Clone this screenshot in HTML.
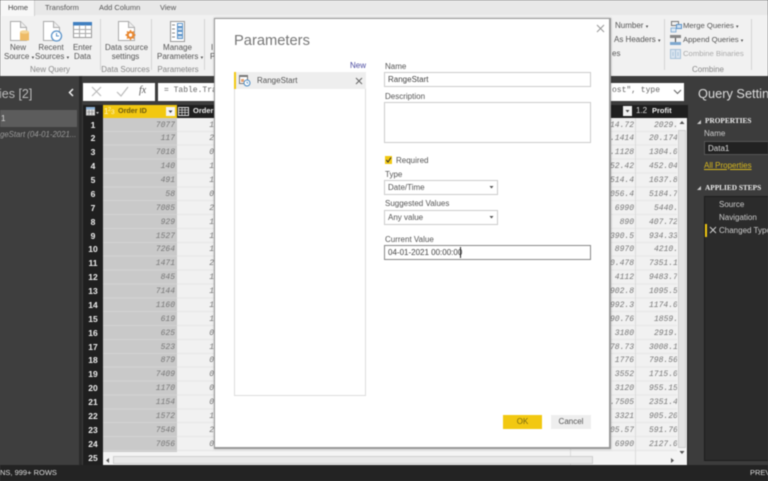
<!DOCTYPE html>
<html><head><meta charset="utf-8"><title>Parameters</title>
<style>
html,body{margin:0;padding:0;width:768px;height:481px;overflow:hidden;background:#3c3c3c}
#w{position:relative;width:768px;height:481px;overflow:hidden;font-family:"Liberation Sans",sans-serif;filter:blur(.5px)}
#w div{position:absolute}
.t{position:absolute;white-space:nowrap;line-height:10px;font-size:8px;color:#555}
.c{text-align:center}
.g{color:#777}
.sep{width:1px;background:#d4d4d4;top:19px;height:51px}
.num{font:italic 8px/13.87px "Liberation Mono",monospace;text-align:right;color:#777;top:118.5px;white-space:nowrap;overflow:hidden}
.in{background:#fff;border:1px solid #ccc;box-sizing:border-box}
svg{position:absolute;overflow:visible}
</style></head><body><div id="w">

<!-- ribbon -->
<div style="left:0;top:0;width:768px;height:15px;background:#e8e8e8"></div>
<div style="left:0;top:15px;width:768px;height:61px;background:#f1f1f1"></div>
<div style="left:1px;top:0;width:33px;height:16px;background:#f7f7f7;border-right:1px solid #d0d0d0"></div>
<span class="t" style="left:8px;top:3px;font-size:7.5px;color:#444">Home</span>
<span class="t" style="left:45px;top:3px;font-size:7.5px">Transform</span>
<span class="t" style="left:99px;top:3px;font-size:7.5px">Add Column</span>
<span class="t" style="left:160px;top:3px;font-size:7.5px">View</span>

<svg style="left:0;top:0" width="768" height="76">
 <!-- new source -->
 <path d="M10.500 21.500h10l6 6v13h-16z" fill="#fff" stroke="#aaa"/><path d="M20.500 21.500v6h6" fill="#eee" stroke="#aaa"/>
 <path d="M20 32h9v8.500h-9z" fill="#eebb66"/><ellipse cx="24.500" cy="32" rx="4.500" ry="1.700" fill="#f4d596"/>
 <!-- recent sources -->
 <path d="M43.500 21.500h10l6 6v13h-16z" fill="#fff" stroke="#aaa"/><path d="M53.500 21.500v6h6" fill="#eee" stroke="#aaa"/>
 <circle cx="56.500" cy="36" r="5" fill="#fff" stroke="#5b93c9" stroke-width="1.300"/><path d="M56.500 33v3h2.500" fill="none" stroke="#5b93c9"/>
 <!-- enter data -->
 <rect x="73.500" y="22.500" width="18" height="15" fill="#fff" stroke="#999"/><rect x="73" y="22" width="19" height="3.500" fill="#3f7fc0"/>
 <path d="M73.500 29.500h18M73.500 33.500h18M79.500 25v12M85.500 25v12" stroke="#aaa" fill="none"/>
 <!-- data source settings -->
 <path d="M118.500 21.500h10l6 6v13h-16z" fill="#fff" stroke="#aaa"/><path d="M128.500 21.500v6h6" fill="#eee" stroke="#aaa"/>
 <circle cx="130.500" cy="35" r="2.800" fill="none" stroke="#e8862e" stroke-width="2.200"/>
 <path d="M130.500 30v2M130.500 38v2M125.500 35h2M133.500 35h2M127 31.500l1.400 1.400M132.600 37.100l1.400 1.400M127 38.500l1.400-1.400M132.600 32.900l1.400-1.400" stroke="#e8862e" stroke-width="1.400"/>
 <!-- manage parameters -->
 <rect x="170.500" y="21.500" width="14" height="20" fill="#fff" stroke="#999"/>
 <path d="M172 25h3M172 29h3M172 33h3M172 37h3" stroke="#888"/>
 <rect x="177.500" y="23.500" width="5" height="3" fill="#fff" stroke="#5b93c9"/><rect x="177.500" y="27.500" width="5" height="3" fill="#cfe0f0" stroke="#5b93c9"/>
 <rect x="177.500" y="31.500" width="5" height="3" fill="#fff" stroke="#5b93c9"/><rect x="177.500" y="35.500" width="5" height="3" fill="#cfe0f0" stroke="#5b93c9"/>
 <!-- merge -->
 <path d="M671.500 21.500h7v4h-7z" fill="none" stroke="#777"/>
 <rect x="676.500" y="24.500" width="5" height="4" fill="#cfe0f0" stroke="#5b93c9"/>
 <rect x="671" y="28" width="5" height="4" fill="#dce8f3" stroke="#5b93c9" stroke-width=".6"/>
 <!-- append -->
 <rect x="670" y="35" width="11" height="3" fill="#888"/><rect x="670" y="42" width="11" height="3" fill="#7ea8cf"/>
 <path d="M675.500 38v4" stroke="#444" fill="none"/>
 <!-- combine -->
 <rect x="670.500" y="49.500" width="10" height="9" fill="#dbe6f0" stroke="#a9c2da"/>
 <path d="M673 52v4M678 52v4M675.500 50v8" stroke="#a9c2da"/>
</svg>

<span class="t c" style="left:8px;width:20px;top:43px">New</span>
<span class="t" style="left:4px;top:52px">Source <span style="font-size:5px">▾</span></span>
<span class="t c" style="left:36px;width:30px;top:43px">Recent</span>
<span class="t" style="left:35px;top:52px">Sources <span style="font-size:5px">▾</span></span>
<span class="t c" style="left:70px;width:25px;top:43px">Enter</span>
<span class="t c" style="left:70px;width:25px;top:52px">Data</span>
<span class="t c g" style="left:25px;width:50px;top:65px;color:#888">New Query</span>
<div class="sep" style="left:100px"></div>
<span class="t" style="left:105px;top:43px">Data source</span>
<span class="t c" style="left:105px;width:41px;top:52px">settings</span>
<span class="t c" style="left:100px;width:51px;top:65px;color:#888">Data Sources</span>
<div class="sep" style="left:151px"></div>
<span class="t c" style="left:155px;width:45px;top:43px">Manage</span>
<span class="t" style="left:157px;top:52px">Parameters <span style="font-size:5px">▾</span></span>
<span class="t c" style="left:152px;width:52px;top:65px;color:#888">Parameters</span>
<div class="sep" style="left:204px"></div>
<span class="t" style="left:211px;top:43px">I</span>
<span class="t" style="left:210px;top:52px">P</span>

<span class="t" style="left:615px;top:21px">Number <span style="font-size:5px">▾</span></span>
<span class="t" style="left:614px;top:35px">As Headers <span style="font-size:5px">▾</span></span>
<span class="t" style="left:612px;top:49px">es</span>
<div class="sep" style="left:664px"></div>
<span class="t" style="left:683px;top:21px;font-size:7.700px">Merge Queries <span style="font-size:5px">▾</span></span>
<span class="t" style="left:683px;top:35px;font-size:7.700px">Append Queries <span style="font-size:5px">▾</span></span>
<span class="t" style="left:683px;top:49px;color:#aaa;font-size:7.700px">Combine Binaries</span>
<span class="t c" style="left:665px;width:86px;top:65px;color:#888">Combine</span>
<div class="sep" style="left:751px"></div>

<!-- left panel -->
<div style="left:0;top:76px;width:80px;height:389px;background:#3e3e3e"></div>
<div style="left:79px;top:76px;width:3px;height:389px;background:#2a2a2a"></div>
<span class="t" style="left:-1px;top:87px;font-size:12.500px;line-height:14px;color:#bbb">ies [2]</span>
<svg style="left:68px;top:88px" width="7" height="9"><path d="M5 1L1.500 4.500 5 8" fill="none" stroke="#eee" stroke-width="1.500"/></svg>
<div style="left:0;top:110px;width:77px;height:17px;background:#5c5c5c"></div>
<span class="t" style="left:1px;top:114px;color:#ddd">1</span>
<span class="t" style="left:0;top:130px;font-style:italic;color:#999;font-size:7.800px">geStart (04-01-2021...</span>

<!-- formula bar -->
<div style="left:83px;top:83px;width:72px;height:18px;background:#fff"></div>
<div style="left:158px;top:83px;width:526px;height:18px;background:#fff"></div>
<svg style="left:83px;top:83px" width="72" height="18">
 <path d="M9 4l9 9M18 4l-9 9" stroke="#bbb" stroke-width="1.200" fill="none"/>
 <path d="M34 9l4 4 7-9" stroke="#bbb" stroke-width="1.200" fill="none"/>
</svg>
<span class="t" style="left:139px;top:86px;font:italic 10px/10px 'Liberation Serif',serif;color:#555">fx</span>
<span class="t" style="left:164px;top:86px;font:8px/10px 'Liberation Mono',monospace;color:#666">= Table.TransformColumnTypes</span>
<span class="t" style="left:611px;top:86px;font:8px/10px 'Liberation Mono',monospace;color:#666;background:#fff;padding-left:1px">ost", type</span>
<svg style="left:673px;top:89px" width="9" height="6"><path d="M1 1l3.500 3.500L8 1" fill="none" stroke="#666" stroke-width="1.100"/></svg>

<!-- grid -->
<div style="left:83px;top:105px;width:605px;height:360px;background:#1f1f1f"></div>
<div style="left:103px;top:118px;width:574px;height:334px;background:repeating-linear-gradient(to bottom,#f1f1f1 0,#f1f1f1 12.870px,#e6e6e6 12.870px,#e6e6e6 13.870px)"></div>
<div style="left:103px;top:118px;width:74px;height:334px;background:repeating-linear-gradient(to bottom,#c9c9c9 0,#c9c9c9 12.870px,#d3d3d3 12.870px,#d3d3d3 13.870px)"></div>
<div style="left:103px;top:452px;width:584px;height:13px;background:#f4f4f4"></div>
<div style="left:103px;top:105px;width:74px;height:13px;background:#f2c811"></div>
<span class="t" style="left:104px;top:107px;font-size:8px;color:#fff6c8">1</span>
<span class="t" style="left:108px;top:105px;font-size:5.500px;color:#fff6c8">2</span>
<span class="t" style="left:111px;top:108px;font-size:6.500px;color:#fff6c8">3</span>
<span class="t" style="left:118px;top:106px;font-weight:bold;font-size:7.200px;color:#6b5a10">Order ID</span>
<div style="left:166px;top:107px;width:9px;height:9px;background:#f4f4f4"></div>
<svg style="left:166px;top:107px" width="9" height="9"><path d="M2.500 3.500h4L4.500 6z" fill="#444"/></svg>
<svg style="left:86px;top:107px" width="14" height="9"><rect x=".5" y=".5" width="8" height="7.500" fill="#ddd" stroke="#ccc"/><rect x="0" y="0" width="9" height="2.500" fill="#8fb4d8"/><path d="M3 3v5M6 3v5M1 5h7" stroke="#777" stroke-width=".6"/><path d="M10 5h3l-1.500 2z" fill="#ccc"/></svg>
<svg style="left:178px;top:107px" width="11" height="9"><rect x=".5" y=".5" width="10" height="8" fill="#222" stroke="#ddd"/><path d="M1 3h9M1 5.500h9M4 1v7M7 1v7" stroke="#ddd" stroke-width=".7"/></svg>
<span class="t" style="left:193px;top:106px;font-weight:bold;font-size:7.500px;color:#eee">Order</span>
<div style="left:623px;top:106px;width:9px;height:10px;background:#f2f2f2"></div>
<svg style="left:623px;top:106px" width="9" height="10"><path d="M2.500 4h4L4.500 6.500z" fill="#444"/></svg>
<span class="t" style="left:636px;top:106px;font-size:8px;color:#ddd">1.2</span>
<span class="t" style="left:652px;top:106px;font-size:7.500px;font-weight:bold;color:#eee">Profit</span>

<div style="left:83px;top:118.500px;width:20px;color:#eee;font:bold 8.500px/13.870px 'Liberation Sans',sans-serif;text-align:center">1<br>2<br>3<br>4<br>5<br>6<br>7<br>8<br>9<br>10<br>11<br>12<br>13<br>14<br>15<br>16<br>17<br>18<br>19<br>20<br>21<br>22<br>23<br>24<br>25</div>
<div class="num" style="left:103px;width:72px;height:334px">7077<br>117<br>7018<br>140<br>491<br>58<br>7085<br>929<br>1527<br>7264<br>1471<br>845<br>7144<br>1160<br>619<br>625<br>523<br>879<br>7409<br>1170<br>1154<br>1572<br>7548<br>7056</div>
<div class="num" style="left:177px;width:37px;height:334px">1<br>2<br>0<br>1<br>1<br>0<br>2<br>1<br>1<br>1<br>2<br>1<br>1<br>1<br>1<br>0<br>1<br>0<br>0<br>0<br>0<br>1<br>2<br>0</div>
<div class="num" style="left:600px;width:34px;height:334px">14.72<br>.1414<br>.1128<br>52.42<br>514.4<br>056.4<br>6990<br>890<br>390.5<br>8970<br>0.478<br>4112<br>902.8<br>992.3<br>90.76<br>3180<br>78.73<br>1776<br>3552<br>3120<br>.7505<br>3321<br>05.57<br>6990</div>
<div style="left:635px;top:118px;width:1px;height:347px;background:#dcdcdc"></div>
<div style="left:570px;top:449px;width:1px;height:16px;background:#dcdcdc"></div>
<div class="num" style="left:638px;width:39px;height:334px;text-align:left;padding-left:0"><span style="margin-left:16px">2029.</span><br><span style="margin-left:11px">20.174</span><br><span style="margin-left:11px">1304.0</span><br><span style="margin-left:11px">452.04</span><br><span style="margin-left:11px">1637.8</span><br><span style="margin-left:11px">5184.7</span><br><span style="margin-left:16px">5440.</span><br><span style="margin-left:11px">407.72</span><br><span style="margin-left:11px">934.33</span><br><span style="margin-left:16px">4210.</span><br><span style="margin-left:11px">7351.1</span><br><span style="margin-left:11px">9483.7</span><br><span style="margin-left:11px">1095.5</span><br><span style="margin-left:11px">1174.0</span><br><span style="margin-left:16px">1859.</span><br><span style="margin-left:16px">2919.</span><br><span style="margin-left:11px">3008.1</span><br><span style="margin-left:11px">798.56</span><br><span style="margin-left:11px">1715.0</span><br><span style="margin-left:11px">955.15</span><br><span style="margin-left:11px">2351.4</span><br><span style="margin-left:11px">905.20</span><br><span style="margin-left:11px">591.76</span><br><span style="margin-left:11px">2127.0</span></div>

<!-- scrollbars -->
<div style="left:677px;top:118px;width:10px;height:347px;background:#f4f4f4"></div>
<div style="left:678px;top:130px;width:8px;height:318px;background:#e4e4e4;border:1px solid #cfcfcf;box-sizing:border-box"></div>
<svg style="left:678px;top:120px" width="8" height="6"><path d="M1.500 4h5L4 1z" fill="#555"/></svg>
<svg style="left:678px;top:449px" width="8" height="6"><path d="M1.500 2h5L4 5z" fill="#555"/></svg>
<div style="left:113px;top:456px;width:480px;height:8px;background:#e8e8e8;border:1px solid #cfcfcf;box-sizing:border-box"></div>
<svg style="left:105px;top:457px" width="6" height="7"><path d="M4 1v5L1 3.500z" fill="#555"/></svg>
<svg style="left:669px;top:457px" width="6" height="7"><path d="M2 1v5l3-2.500z" fill="#555"/></svg>

<!-- right panel -->
<div style="left:688px;top:76px;width:80px;height:389px;background:#3c3c3c"></div>
<span class="t" style="left:698px;top:86px;font-size:12.800px;line-height:15px;color:#ddd">Query Settings</span>
<svg style="left:696px;top:119px" width="6" height="6"><path d="M5 1v4H1z" fill="#ccc"/></svg>
<span class="t" style="left:705px;top:116px;font:bold 7.300px/10px 'Liberation Serif',serif;color:#eee">PROPERTIES</span>
<span class="t" style="left:704px;top:129px;color:#ccc">Name</span>
<div style="left:704px;top:141px;width:70px;height:14px;background:#222;border:1px solid #555;box-sizing:border-box"></div>
<span class="t" style="left:708px;top:144px;color:#ddd">Data1</span>
<span class="t" style="left:704px;top:161px;color:#d8b81e;text-decoration:underline">All Properties</span>
<svg style="left:696px;top:185px" width="6" height="6"><path d="M5 1v4H1z" fill="#ccc"/></svg>
<span class="t" style="left:705px;top:183px;font:bold 7.300px/10px 'Liberation Serif',serif;color:#eee">APPLIED STEPS</span>
<div style="left:704px;top:196px;width:70px;height:265px;background:#2b2b2b;border:1px solid #1c1c1c;box-sizing:border-box"></div>
<span class="t" style="left:719px;top:200px;color:#ccc">Source</span>
<span class="t" style="left:719px;top:213px;color:#ccc">Navigation</span>
<div style="left:705px;top:224px;width:2px;height:13px;background:#f2c811"></div>
<svg style="left:709px;top:226px" width="8" height="8"><path d="M1 1l6 6M7 1L1 7" stroke="#ccc" stroke-width="1"/></svg>
<span class="t" style="left:719px;top:226px;color:#ccc">Changed Type</span>

<!-- status bar -->
<div style="left:0;top:465px;width:768px;height:16px;background:#232323"></div>
<span class="t" style="left:0;top:468px;color:#ddd;font-size:7.500px">NS, 999+ ROWS</span>
<span class="t" style="left:750px;top:468px;color:#ddd;font-size:7.500px">PREVI</span>

<!-- dialog -->
<div style="left:214px;top:18px;width:397px;height:431px;background:#fff;border:1px solid #999;border-width:1px 2px 2px 1px;box-sizing:border-box;box-shadow:0 0 2px rgba(0,0,0,.25)"></div>
<svg style="left:596px;top:24px" width="9" height="9"><path d="M1 1l7 7M8 1L1 8" stroke="#999" stroke-width="1"/></svg>
<span class="t" style="left:234px;top:33px;font-size:14.700px;line-height:17px;color:#777">Parameters</span>
<span class="t" style="left:350px;top:61px;color:#4a4aa0">New</span>
<div style="left:234px;top:72px;width:132px;height:324px;background:#fff;border:1px solid #dcdcdc;box-sizing:border-box"></div>
<div style="left:234px;top:72px;width:132px;height:17px;background:#eee"></div>
<div style="left:234px;top:72px;width:2px;height:17px;background:#f2c811"></div>
<svg style="left:239px;top:75px" width="12" height="12">
 <rect x=".5" y=".5" width="8" height="8" fill="#fff" stroke="#777"/><rect x="0" y="0" width="9" height="2" fill="#777"/>
 <rect x="2" y="4" width="3" height="3" fill="#e8a070"/>
 <circle cx="8" cy="8" r="3" fill="#fff" stroke="#4d8cc4"/><path d="M8 6.500V8h1.300" fill="none" stroke="#4d8cc4" stroke-width=".7"/>
</svg>
<span class="t" style="left:257px;top:76px;color:#555">RangeStart</span>
<svg style="left:355px;top:77px" width="8" height="8"><path d="M1 1l6 6M7 1L1 7" stroke="#666" stroke-width="1"/></svg>

<span class="t" style="left:385px;top:61.500px">Name</span>
<div class="in" style="left:384px;top:72px;width:207px;height:15px"></div>
<span class="t" style="left:388px;top:75px;color:#444">RangeStart</span>
<span class="t" style="left:385px;top:91.500px">Description</span>
<div class="in" style="left:384px;top:102px;width:207px;height:41px"></div>
<div style="left:385px;top:156px;width:7px;height:8px;background:#f2c811"></div>
<svg style="left:385px;top:156px" width="7" height="8"><path d="M1.300 4l1.700 2L6 1.500" fill="none" stroke="#333" stroke-width="1"/></svg>
<span class="t" style="left:396px;top:156px">Required</span>
<span class="t" style="left:385px;top:170px">Type</span>
<div class="in" style="left:384px;top:180px;width:114px;height:15px"></div>
<span class="t" style="left:388px;top:183px">Date/Time</span>
<svg style="left:489px;top:185px" width="5" height="4"><path d="M.5 1h4L2.500 3.500z" fill="#555"/></svg>
<span class="t" style="left:385px;top:199px">Suggested Values</span>
<div class="in" style="left:384px;top:210px;width:114px;height:15px"></div>
<span class="t" style="left:388px;top:213px">Any value</span>
<svg style="left:489px;top:215px" width="5" height="4"><path d="M.5 1h4L2.500 3.500z" fill="#555"/></svg>
<span class="t" style="left:385px;top:235px">Current Value</span>
<div class="in" style="left:384px;top:245px;width:207px;height:15px;border-color:#888"></div>
<span class="t" style="left:388px;top:248px;color:#444">04-01-2021 00:00:00</span>
<div style="left:460px;top:247px;width:1px;height:11px;background:#222"></div>

<div style="left:503px;top:415px;width:39px;height:14px;background:#f2c811"></div>
<span class="t c" style="left:503px;top:417px;width:39px;color:#7a6a10">OK</span>
<div style="left:551px;top:415px;width:40px;height:14px;background:#eee"></div>
<span class="t c" style="left:551px;top:417px;width:40px">Cancel</span>
</div></body></html>
